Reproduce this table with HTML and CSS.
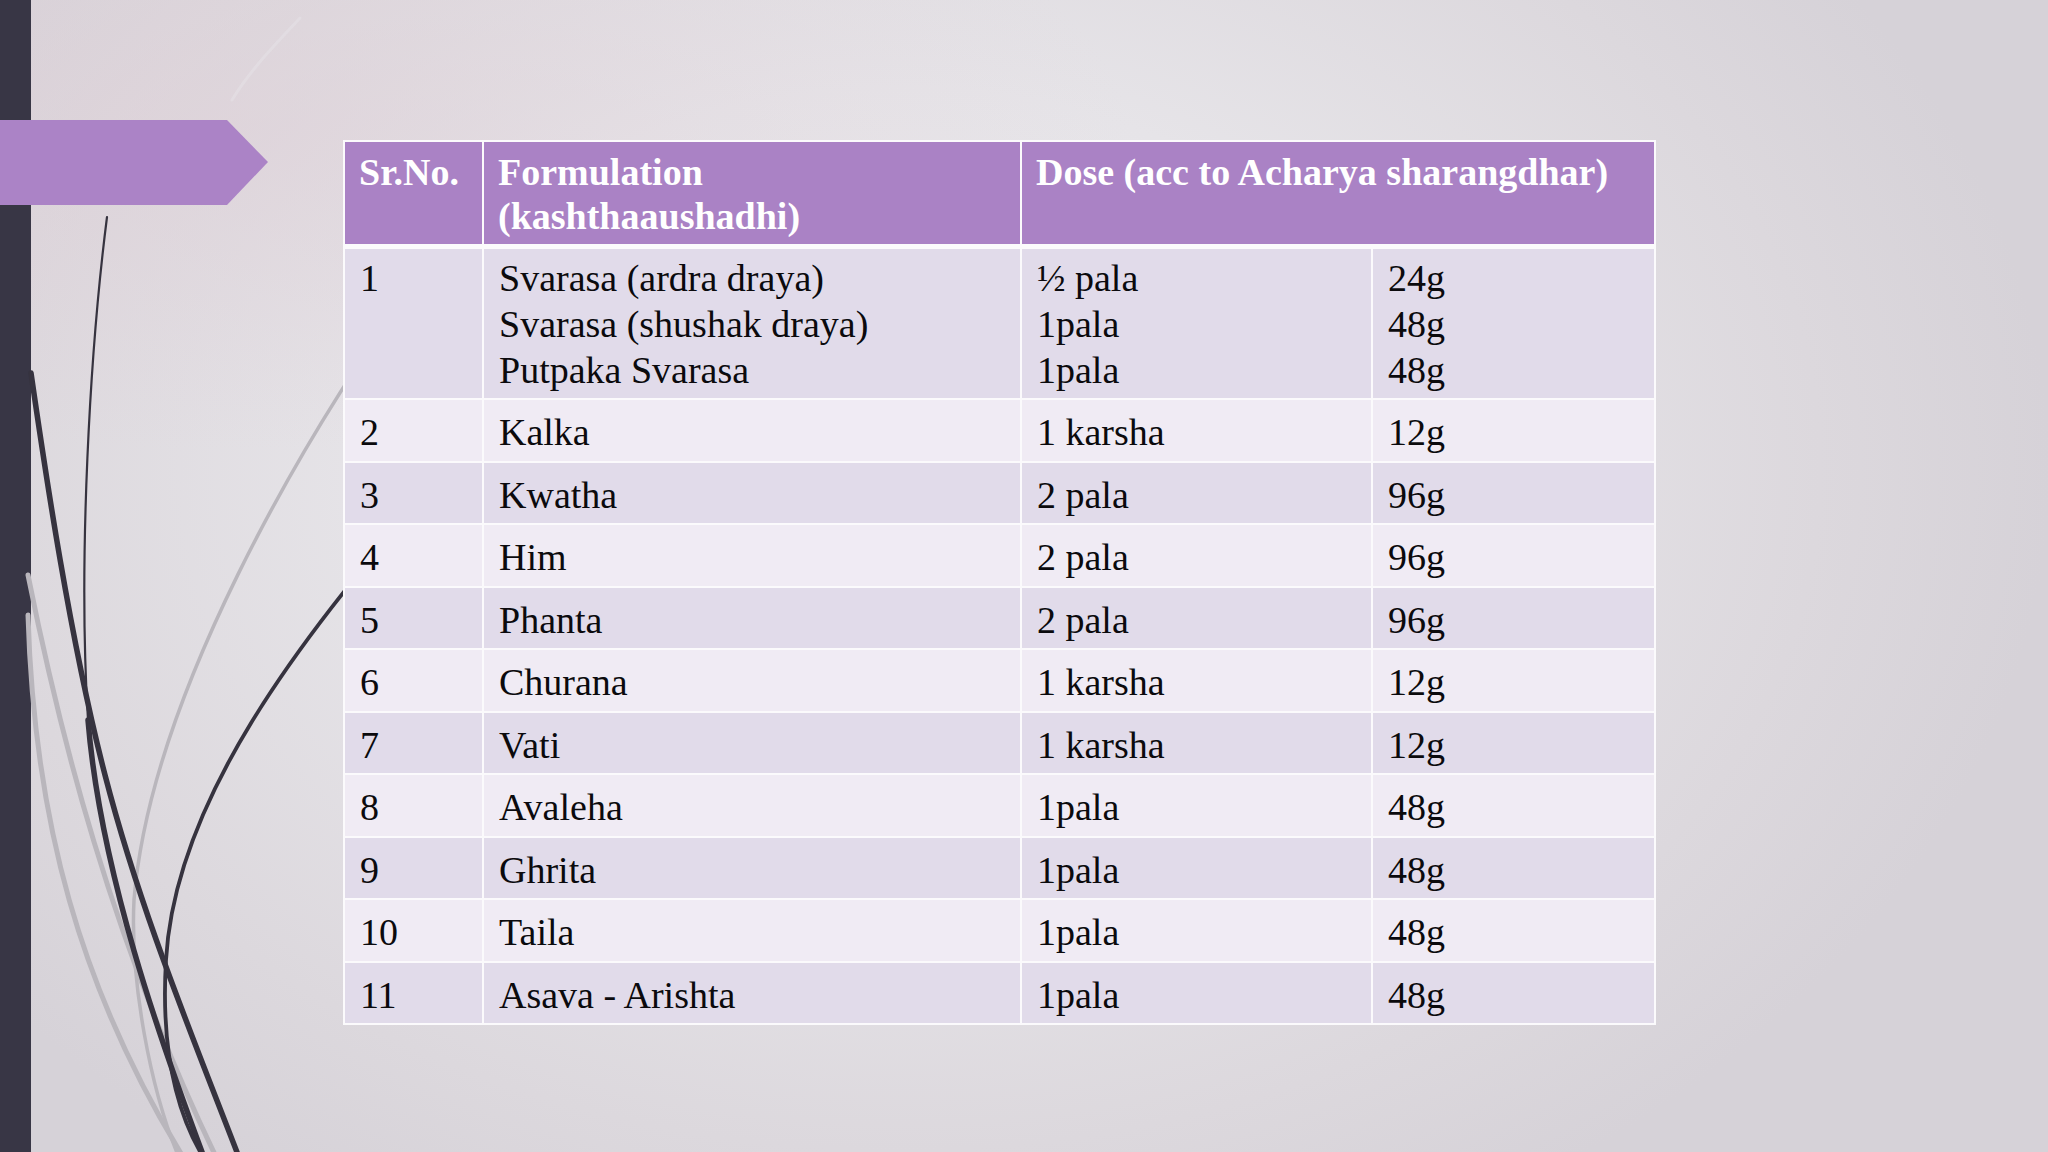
FILE: index.html
```html
<!DOCTYPE html>
<html lang="en">
<head>
<meta charset="utf-8">
<title>Dose table</title>
<link rel="stylesheet" href="styles.css">
</head>
<body>
<div class="slide">
  <div class="bar"></div>
  <svg class="deco" viewBox="0 0 2048 1152" width="2048" height="1152" aria-hidden="true">
    <path class="faint" d="M300,18 C275,45 250,70 232,100"/>
    <path class="gray" d="M420,275 C300,440 150,700 134,900 C130,980 150,1090 180,1160"/>
    <path class="gray g-thick" d="M28,615 C34,820 80,990 185,1160"/>
    <path class="gray g-thick" d="M28,575 C58,725 110,940 220,1165"/>
    <path class="dark d-thin" d="M107,217 C90,350 78,560 88,720"/>
    <path class="dark d-bold" d="M88,720 C100,870 160,1040 205,1160"/>
    <path class="dark d-bold" d="M31,373 C45,470 70,640 105,775 C140,910 190,1030 240,1160"/>
    <path class="dark d-mid" d="M420,500 C300,640 175,800 166,960 C160,1060 180,1120 205,1160"/>
    <polygon class="arrow" points="0,120 227,120 268,162 227,205 0,205"/>
  </svg>
  <div class="content">
    <table class="dose-table">
      <colgroup>
        <col class="c1"><col class="c2"><col class="c3"><col class="c4">
      </colgroup>
      <thead>
        <tr>
          <th>Sr.No.</th>
          <th>Formulation<br>(kashthaaushadhi)</th>
          <th colspan="2">Dose (acc to Acharya sharangdhar)</th>
        </tr>
      </thead>
      <tbody>
        <tr class="odd first">
          <td>1</td>
          <td>Svarasa (ardra draya)<br>Svarasa (shushak draya)<br>Putpaka Svarasa</td>
          <td>½ pala<br>1pala<br>1pala</td>
          <td>24g<br>48g<br>48g</td>
        </tr>
        <tr class="even"><td>2</td><td>Kalka</td><td>1 karsha</td><td>12g</td></tr>
        <tr class="odd"><td>3</td><td>Kwatha</td><td>2 pala</td><td>96g</td></tr>
        <tr class="even"><td>4</td><td>Him</td><td>2 pala</td><td>96g</td></tr>
        <tr class="odd"><td>5</td><td>Phanta</td><td>2 pala</td><td>96g</td></tr>
        <tr class="even"><td>6</td><td>Churana</td><td>1 karsha</td><td>12g</td></tr>
        <tr class="odd"><td>7</td><td>Vati</td><td>1 karsha</td><td>12g</td></tr>
        <tr class="even"><td>8</td><td>Avaleha</td><td>1pala</td><td>48g</td></tr>
        <tr class="odd"><td>9</td><td>Ghrita</td><td>1pala</td><td>48g</td></tr>
        <tr class="even"><td>10</td><td>Taila</td><td>1pala</td><td>48g</td></tr>
        <tr class="odd"><td>11</td><td>Asava - Arishta</td><td>1pala</td><td>48g</td></tr>
      </tbody>
    </table>
  </div>
</div>
</body>
</html>
```
FILE: styles.css
```css
html, body {
  margin: 0;
  padding: 0;
}

body {
  width: 2048px;
  height: 1152px;
  overflow: hidden;
}

.slide {
  position: relative;
  width: 2048px;
  height: 1152px;
  display: flex;
  overflow: hidden;
  font-family: "Liberation Serif", "Times New Roman", serif;
  background:
    radial-gradient(ellipse 900px 320px at 230px 130px, rgba(222, 206, 214, 0.5), rgba(222, 206, 214, 0) 100%),
    radial-gradient(ellipse 1150px 850px at 900px 470px, #eeedef 0%, #e6e4e8 45%, #dcd8dd 80%, #d6d2d8 100%);
}

.bar {
  flex: none;
  width: 31px;
  background: #383645;
}

.deco {
  position: absolute;
  left: 0;
  top: 0;
  z-index: 1;
}

.deco path {
  fill: none;
  stroke-linecap: round;
}

.faint {
  stroke: #e6e5e9;
  stroke-width: 3;
  opacity: 0.45;
}

.gray {
  stroke: #b9b6bc;
  stroke-width: 3.5;
}

.g-thick {
  stroke-width: 5;
}

.dark {
  stroke: #36333f;
}

.d-thin {
  stroke-width: 2.2;
}

.d-bold {
  stroke-width: 5.5;
}

.d-mid {
  stroke-width: 3.8;
}

.arrow {
  fill: #ab83c6;
}

.content {
  position: relative;
  z-index: 2;
  flex: 1;
  padding: 140px 0 0 312px;
}

.dose-table {
  box-sizing: border-box;
  width: 1313px;
  table-layout: fixed;
  border-collapse: separate;
  border-spacing: 0;
  border-left: 2px solid #fbfafc;
  border-top: 2px solid #fbfafc;
  font-size: 38px;
  color: #0b0a0d;
}

.c1 { width: 139px; }
.c2 { width: 538px; }
.c3 { width: 351px; }
.c4 { width: 283px; }

.dose-table th,
.dose-table td {
  box-sizing: border-box;
  text-align: left;
  vertical-align: top;
  border-right: 2px solid #fbfafc;
  border-bottom: 2px solid #fbfafc;
  white-space: nowrap;
}

.dose-table th {
  background: #aa82c5;
  color: #ffffff;
  font-weight: bold;
  line-height: 44px;
  padding: 8px 14px 6px 14px;
  border-bottom-width: 5px;
}

.dose-table td {
  font-weight: normal;
  line-height: 46px;
  padding: 9px 14px 5.5px 15px;
}

.dose-table tr.first td {
  padding-top: 6px;
  padding-bottom: 5px;
}

.odd td {
  background: #e1dbea;
}

.even td {
  background: #f0ebf4;
}
```
